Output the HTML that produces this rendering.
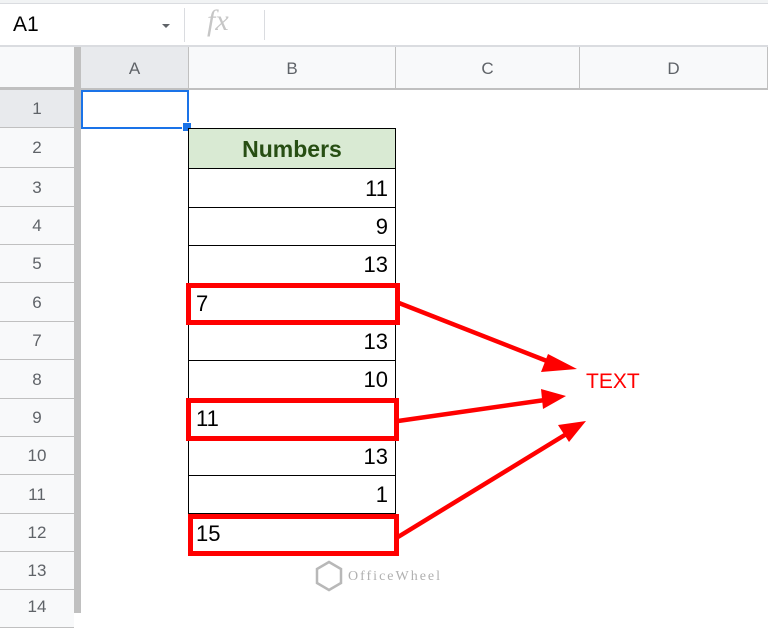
<!DOCTYPE html>
<html><head><style>
body{margin:0;width:768px;height:613px;overflow:hidden;background:#fff;font-family:"Liberation Sans",Arial,sans-serif;position:relative}
.a{position:absolute}
.rh{position:absolute;left:0;width:80px;background:#f8f9fa;border-bottom:1px solid #c0c0c0;color:#5f6368;font-size:17px;text-align:center;box-sizing:border-box}
.ch{position:absolute;top:47px;height:43px;background:#f8f9fa;border-right:1px solid #c0c0c0;color:#5f6368;font-size:17px;text-align:center;line-height:43px;box-sizing:border-box}
.cell{position:absolute;left:188px;width:208px;border:1px solid #000;border-top:none;box-sizing:border-box;font-size:22px;color:#000;text-align:right;padding-right:7px}
</style></head><body>
<div class="a" style="left:0;top:0;width:768px;height:3px;background:#f1f3f4;border-bottom:1px solid #dadce0"></div>
<div class="a" style="left:13px;top:13px;font-size:21px;color:#000">A1</div>
<div class="a" style="left:162px;top:24px;width:0;height:0;border-left:4px solid transparent;border-right:4px solid transparent;border-top:4px solid #5f6368"></div>
<div class="a" style="left:184px;top:8px;width:1px;height:34px;background:#dadce0"></div>
<div class="a" style="left:207px;top:4px;font-size:30px;font-style:italic;color:#c6c6c6;font-family:'Liberation Serif',serif">fx</div>
<div class="a" style="left:264px;top:10px;width:1px;height:30px;background:#dadce0"></div>
<div class="a" style="left:0;top:45px;width:768px;height:2px;background:#dadce0"></div>
<div class="a" style="left:0;top:47px;width:74px;height:40px;background:#f8f9fa"></div>
<div class="a" style="left:74px;top:47px;width:7px;height:566px;background:#c0c0c0"></div>
<div class="a" style="left:0;top:87px;width:76px;height:3px;background:#c0c0c0"></div>
<div class="ch" style="left:81px;width:108px;background:#e8eaed">A</div>
<div class="ch" style="left:189px;width:207px">B</div>
<div class="ch" style="left:396px;width:184px">C</div>
<div class="ch" style="left:580px;width:188px">D</div>
<div class="a" style="left:81px;top:88px;width:687px;height:2px;background:#c0c0c0"></div>
<div class="rh" style="top:90px;height:38px;line-height:38px;width:74px;background:#e8eaed">1</div>
<div class="rh" style="top:128px;height:40px;line-height:40px;width:74px">2</div>
<div class="rh" style="top:168px;height:39px;line-height:39px;width:74px">3</div>
<div class="rh" style="top:207px;height:38px;line-height:38px;width:74px">4</div>
<div class="rh" style="top:245px;height:38px;line-height:38px;width:74px">5</div>
<div class="rh" style="top:283px;height:39px;line-height:39px;width:74px">6</div>
<div class="rh" style="top:322px;height:38px;line-height:38px;width:74px">7</div>
<div class="rh" style="top:360px;height:39px;line-height:39px;width:74px">8</div>
<div class="rh" style="top:399px;height:38px;line-height:38px;width:74px">9</div>
<div class="rh" style="top:437px;height:38px;line-height:38px;width:74px">10</div>
<div class="rh" style="top:475px;height:39px;line-height:39px;width:74px">11</div>
<div class="rh" style="top:514px;height:38px;line-height:38px;width:74px">12</div>
<div class="rh" style="top:552px;height:38px;line-height:38px;width:74px">13</div>
<div class="rh" style="top:590px;height:38px;line-height:34px;width:74px">14</div>
<div class="a" style="left:81px;top:90px;width:104px;height:35px;border:2px solid #1a73e8"></div>
<div class="a" style="left:182px;top:122px;width:8px;height:8px;background:#1a73e8;border:1px solid #fff"></div>
<div class="a" style="left:188px;top:128px;width:208px;height:41px;background:#d9ead3;border:1px solid #000;box-sizing:border-box;text-align:center;font-weight:bold;font-size:23px;line-height:40px;color:#274e13">Numbers</div>
<div class="cell" style="top:169px;height:39px;line-height:40px">11</div>
<div class="cell" style="top:208px;height:38px;line-height:38px">9</div>
<div class="cell" style="top:246px;height:38px;line-height:38px">13</div>
<div class="cell" style="top:284px;height:39px;line-height:40px;text-align:left;padding-left:7px">7</div>
<div class="cell" style="top:323px;height:38px;line-height:38px">13</div>
<div class="cell" style="top:361px;height:38px;line-height:38px">10</div>
<div class="cell" style="top:399px;height:39px;line-height:40px;text-align:left;padding-left:7px">11</div>
<div class="cell" style="top:438px;height:38px;line-height:38px">13</div>
<div class="cell" style="top:476px;height:38px;line-height:38px">1</div>
<div class="cell" style="top:514px;height:39px;line-height:40px;text-align:left;padding-left:7px">15</div>
<svg class="a" style="left:0;top:0" width="768" height="613">
<g fill="none" stroke="#f00" stroke-width="5">
<rect x="188.5" y="285.5" width="209" height="37"/>
<rect x="188.5" y="400.5" width="208" height="38"/>
<rect x="190.5" y="516.5" width="206" height="37"/>
</g>
<g fill="none" stroke="#f00" stroke-width="4.5">
<line x1="399" y1="303" x2="552" y2="363"/>
<line x1="398" y1="421" x2="545" y2="400"/>
<line x1="398" y1="537" x2="568" y2="433"/>
</g>
<g fill="#f00">
<polygon points="577,369 548,354 541,372"/>
<polygon points="566,396 541,389 543,409"/>
<polygon points="586,421 558,425 569,442"/>
</g>
<text x="586" y="388" fill="#f00" font-size="21" font-family="Liberation Sans,sans-serif">TEXT</text>
<text x="348" y="580" fill="#b0b0b0" font-size="14" font-family="Liberation Serif,serif" letter-spacing="2">OfficeWheel</text>
<polygon points="329,562 341,569 341,583 329,590 317,583 317,569" fill="none" stroke="#b8b8b8" stroke-width="2.5"/>
</svg>
</body></html>
